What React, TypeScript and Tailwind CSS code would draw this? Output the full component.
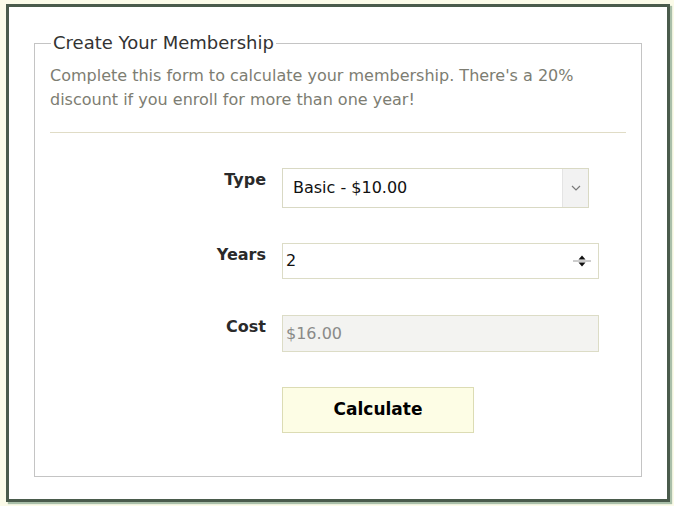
import React from 'react';

const rowLabel =
  'w-[232px] shrink-0 pr-4 text-right text-[16px] font-bold text-[#2a2a2a]';

function Chevron() {
  return (
    <svg width="10" height="6" viewBox="0 0 10 6" fill="none">
      <path d="M1 1l4 4 4-4" stroke="#7a7a7a" strokeWidth="1.2" />
    </svg>
  );
}

function Spinner() {
  return (
    <svg width="22" height="16" viewBox="0 0 22 16">
      <path d="M11 2.5l3.5 4h-7z" fill="#111" />
      <line x1="2" y1="8" x2="20" y2="8" stroke="#9a9a9a" strokeWidth="1" />
      <path d="M11 13.5l3.5-4h-7z" fill="#111" />
    </svg>
  );
}

export default function App() {
  return (
    <div
      className="w-[674px] h-[506px] bg-[#fbfbe9] pl-[6px] pt-[4px]"
      style={{ fontFamily: '"DejaVu Sans", sans-serif' }}
    >
      <div className="w-[664px] h-[498px] border-[3px] border-[#4a5b4c] bg-white pl-[25px] pt-[25px] shadow-[2px_2px_1px_#a9bfa9]">
        <fieldset className="w-[608px] h-[445px] border border-[#c4c4c4] px-[15px]">
          <legend className="ml-[1px] px-[2px] text-[18px] leading-[22px] text-[#333]">
            Create Your Membership
          </legend>
          <p className="mt-[10px] text-[16px] leading-[24px] text-[#7d7d72]">
            Complete this form to calculate your membership. There's a 20%
            discount if you enroll for more than one year!
          </p>
          <div className="mt-[20px] h-px bg-[#e0dcc6]" />

          <div className="mt-[35px] flex flex-col gap-[35px]">
            <div className="flex">
              <div className={rowLabel}>Type</div>
              <div className="flex h-[40px] w-[307px] items-stretch border border-[#d9d9c4] bg-white">
                <span className="flex-1 pl-[10px] text-[16px] leading-[38px] text-[#111]">
                  Basic - $10.00
                </span>
                <span className="flex w-[26px] items-center justify-center border-l border-[#e4e4e4] bg-[#f2f2f2]">
                  <Chevron />
                </span>
              </div>
            </div>

            <div className="flex">
              <div className={rowLabel}>Years</div>
              <div className="flex h-[36px] w-[317px] items-center justify-between border border-[#dcdcc6] bg-white pl-[3px] pr-[5px]">
                <span className="text-[16px] text-[#111]">2</span>
                <Spinner />
              </div>
            </div>

            <div className="mt-[1px] flex">
              <div className={rowLabel}>Cost</div>
              <div className="flex h-[37px] w-[317px] items-center border border-[#dcdcc6] bg-[#f3f3f1] pl-[3px]">
                <span className="text-[16px] text-[#8a8a88]">$16.00</span>
              </div>
            </div>

            <div className="flex">
              <div className="w-[232px] shrink-0" />
              <button className="h-[46px] w-[192px] border border-[#dcdcb4] bg-[#fdfde5] text-[17px] font-bold text-black">
                Calculate
              </button>
            </div>
          </div>
        </fieldset>
      </div>
    </div>
  );
}
